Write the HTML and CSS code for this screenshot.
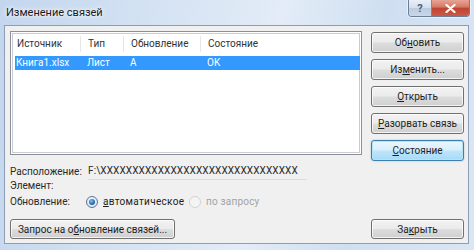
FILE: index.html
```html
<!DOCTYPE html>
<html lang="ru">
<head>
<meta charset="utf-8">
<title>Изменение связей</title>
<link rel="stylesheet" href="styles.css">
</head>
<body>
<div class="window">
  <div class="titlebar">
    <span class="title">Изменение связей</span>
    <div class="caption-btns">
      <span class="cap help">?</span>
      <span class="cap close"><svg width="11" height="9" viewBox="0 0 11 9"><path d="M1.5 1 L9.5 8 M9.5 1 L1.5 8" stroke="#fff" stroke-width="2.2" stroke-linecap="round"/></svg></span>
    </div>
  </div>
  <div class="client">
    <div class="main">
      <div class="listbox">
        <div class="lv-head">
          <span class="hc first">Источник</span>
          <span class="hc">Тип</span>
          <span class="hc">Обновление</span>
          <span class="hc last">Состояние</span>
        </div>
        <div class="lv-row selected">
          <span class="rc first">Книга1.xlsx</span>
          <span class="rc">Лист</span>
          <span class="rc">А</span>
          <span class="rc">OK</span>
        </div>
      </div>
      <div class="btn-col">
        <button class="btn">Об<u>н</u>овить</button>
        <button class="btn">Из<u>м</u>енить...</button>
        <button class="btn"><u>О</u>ткрыть</button>
        <button class="btn"><u>Р</u>азорвать связь</button>
        <button class="btn focused"><u>С</u>остояние</button>
      </div>
    </div>
    <div class="info">
      <span class="lbl">Расположение:</span>
      <span class="val path">F:\XXXXXXXXXXXXXXXXXXXXXXXXXXXXXXX</span>
      <span class="lbl">Элемент:</span>
      <span class="val"></span>
      <span class="lbl">Обновление:</span>
      <span class="val radios">
        <span class="radio on"><span class="dot"></span></span>
        <span class="rlabel auto"><u>а</u>втоматическое</span>
        <span class="radio off"></span>
        <span class="rlabel disabled">по запросу</span>
      </span>
    </div>
    <div class="bottom">
      <button class="btn wide">Запрос на о<u>б</u>новление связей...</button>
      <button class="btn">За<u>к</u>рыть</button>
    </div>
  </div>
</div>
</body>
</html>
```
FILE: styles.css
```css
* { box-sizing: border-box; }
html, body { margin: 0; padding: 0; }
body {
  width: 474px;
  height: 250px;
  overflow: hidden;
  font-family: Roboto, "Noto Sans", "DejaVu Sans", sans-serif;
  font-size: 10px;
  color: #1e1e1e;
}
.window {
  width: 474px;
  height: 250px;
  display: flex;
  flex-direction: column;
  background: linear-gradient(100deg, #c3d6ee 0%, #d4e2f3 30%, #e3ecf7 55%, #cfdff1 75%, #dbe6f4 100%);
}
.titlebar {
  height: 25px;
  display: flex;
  justify-content: space-between;
  align-items: flex-start;
  padding-left: 6px;
  padding-right: 4px;
  flex: none;
}
.title {
  font-size: 11px;
  line-height: 26px;
  color: #1a1a1a;
  text-shadow: 0 0 6px #fff, 0 0 3px #fff;
}
.caption-btns {
  display: flex;
  height: 17px;
  border: 1px solid #6d7f96;
  border-top: none;
  border-radius: 0 0 4px 4px;
  overflow: hidden;
  box-shadow: 0 0 0 1px rgba(255,255,255,0.5);
}
.cap {
  display: flex;
  align-items: center;
  justify-content: center;
  height: 100%;
}
.help {
  width: 23px;
  background: linear-gradient(#e9eff7 0%, #d3dfee 50%, #bccbe0 51%, #c9d7ea 100%);
  color: #4b5f78;
  font-size: 11px;
  font-weight: bold;
  border-right: 1px solid #7a8aa0;
}
.close {
  width: 37px;
  background: linear-gradient(#e8a493 0%, #d47865 45%, #c1432f 50%, #c95b48 100%);
}
.client {
  flex: 1;
  margin: 0 5px 6px 4px;
  background: #f0f0f0;
  border: 1px solid #8d9db3;
  padding: 5px 4px 4px 5px;
  display: flex;
  flex-direction: column;
}
.main {
  display: flex;
  align-items: flex-start;
  gap: 9px;
}
.listbox {
  width: 352px;
  height: 124px;
  background: #fff;
  border: 1px solid #8a8f98;
  box-shadow: inset 0 0 0 1px #fff, inset 0 0 0 2px #c9ccd1;
  padding: 2px 1px 0 0;
}
.lv-head {
  display: grid;
  grid-template-columns: 70px 43px 77px 1fr;
  height: 20px;
  align-items: center;
}
.hc {
  padding-left: 7px;
  color: #333;
  border-right: 1px solid #e3e6ea;
  line-height: 16px;
}
.hc.first { padding-left: 6px; }
.hc.last { border-right: none; }
.lv-row {
  display: grid;
  grid-template-columns: 65px 43px 77px 1fr;
  margin: 2px 0 0 4px;
  height: 14px;
  align-items: center;
}
.lv-row.selected {
  background: #3399ff;
  color: #fff;
}
.rc { padding-left: 7px; line-height: 14px; }
.rc.first { padding-left: 1px; }
.btn-col {
  width: 93px;
  margin-top: 1px;
  display: flex;
  flex-direction: column;
  gap: 6px;
}
.btn {
  font-family: inherit;
  font-size: 10px;
  color: #1e1e1e;
  height: 21px;
  padding: 0 4px;
  border: 1px solid #707070;
  border-radius: 3px;
  background: linear-gradient(#f2f2f2 0%, #ebebeb 48%, #dddddd 52%, #cfcfcf 100%);
  box-shadow: inset 0 0 0 1px rgba(255,255,255,0.75);
  line-height: 17px;
  white-space: nowrap;
  cursor: default;
}
.btn-col .btn { width: 93px; }
.btn.focused {
  border-color: #3c7fb1;
  box-shadow: inset 0 0 0 1px #b6e4f7, 0 0 2px rgba(60,127,177,0.4);
  background: linear-gradient(#eaf6fd 0%, #d9f0fc 48%, #bee6fd 52%, #a7d9f5 100%);
}
.btn u { text-decoration-thickness: 1px; text-underline-offset: 1px; }
.info {
  margin-top: 4px;
  display: grid;
  grid-template-columns: 78px 1fr;
  grid-template-rows: 14px 14px 17px;
  align-items: center;
}
.lbl { color: #2a2a2a; line-height: 14px; white-space: nowrap; }
.val { line-height: 14px; }
.path {
  width: 219px;
  border-bottom: 1px solid #dcdcdc;
  padding-bottom: 1px;
  letter-spacing: 0.1px;
  color: #2a2a2a;
  white-space: nowrap;
  overflow: hidden;
}
.radios {
  display: flex;
  align-items: center;
}
.radio {
  width: 12px;
  height: 12px;
  border-radius: 50%;
  display: flex;
  align-items: center;
  justify-content: center;
  flex: none;
}
.radio.on {
  margin-left: -2px;
  border: 1px solid #5e7694;
  background: radial-gradient(circle at 50% 40%, #ffffff 0%, #dbe6f2 70%, #b9c9dc 100%);
}
.radio.on .dot {
  width: 6px;
  height: 6px;
  border-radius: 50%;
  background: radial-gradient(circle at 40% 35%, #7fc0f2 0%, #2c6fb3 55%, #123f73 100%);
}
.radio.off {
  border: 1px solid #d2d2d2;
  background: #f4f4f4;
}
.rlabel { margin-left: 5px; color: #1e1e1e; }
.rlabel.auto { width: 86px; letter-spacing: 0.3px; }
.rlabel.disabled { color: #a3a3a3; margin-left: 5px; letter-spacing: 0.2px; }
.bottom {
  margin-top: auto;
  display: flex;
  justify-content: space-between;
  align-items: flex-end;
}
.bottom .btn { width: 93px; height: 20px; }
.bottom .btn.wide { width: 165px; padding: 0 4px; }
```
